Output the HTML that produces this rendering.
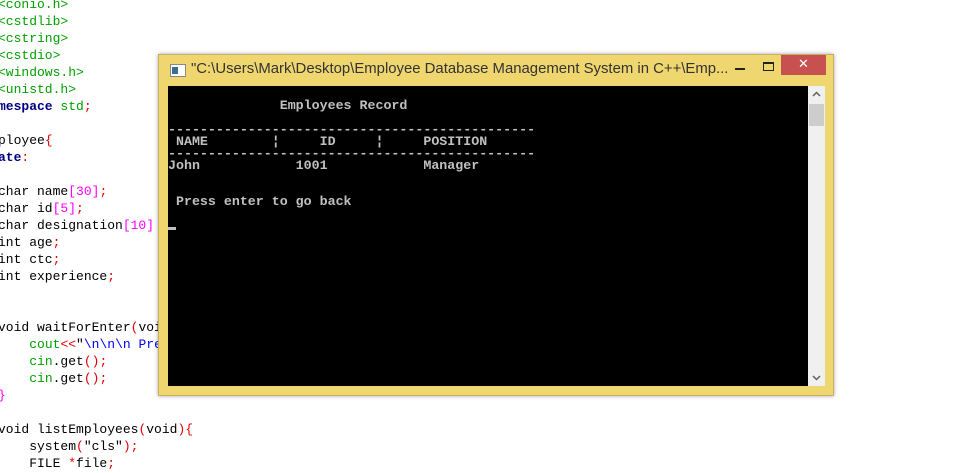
<!DOCTYPE html>
<html><head><style>
body{margin:0;width:961px;height:473px;background:#fff;overflow:hidden;position:relative;font-family:"Liberation Mono",monospace}
.code{position:absolute;left:-2px;top:-4px;font-size:13px;line-height:17px;white-space:pre;color:#000}
.g{color:#00a000}.r{color:#e00000}.m{color:#ff00ff}.b{color:#000080;font-weight:bold}.s{color:#0000ff}
#win{position:absolute;left:158px;top:54px;width:676px;height:342px;background:#f0d66e;box-shadow:0 0 4px rgba(0,0,0,.35);border:1px solid #c8b060;box-sizing:border-box}
#con{position:absolute;left:168px;top:86px;width:640px;height:300px;background:#000;overflow:hidden}
#con pre{margin:0;font-family:"Liberation Mono",monospace;font-size:13.3px;line-height:12px;color:#c0c0c0;font-weight:bold;position:absolute;left:0;top:14px}
#sb{position:absolute;left:808px;top:86px;width:17px;height:300px;background:#f0f0f0}
</style></head><body>
<div class="code"><span class="g">&lt;conio.h&gt;</span>
<span class="g">&lt;cstdlib&gt;</span>
<span class="g">&lt;cstring&gt;</span>
<span class="g">&lt;cstdio&gt;</span>
<span class="g">&lt;windows.h&gt;</span>
<span class="g">&lt;unistd.h&gt;</span>
<span class="b">mespace</span> <span class="g">std</span><span class="r">;</span>

ployee<span class="r">{</span>
<span class="b">ate</span><span class="r">:</span>

char name<span class="m">[30]</span><span class="r">;</span>
char id<span class="m">[5]</span><span class="r">;</span>
char designation<span class="m">[10]</span>
int age<span class="r">;</span>
int ctc<span class="r">;</span>
int experience<span class="r">;</span>


void waitForEnter<span class="r">(</span>void
    <span class="g">cout</span><span class="r">&lt;&lt;</span>"<span class="s">\n\n\n Pre</span>
    <span class="g">cin</span>.get<span class="r">();</span>
    <span class="g">cin</span>.get<span class="r">();</span>
<span class="m">}</span>

void listEmployees<span class="r">(</span>void<span class="r">){</span>
    system<span class="r">(</span>"cls"<span class="r">);</span>
    FILE <span class="r">*</span>file<span class="r">;</span></div>
<div id="win">
<div style="position:absolute;left:11px;top:9px;width:14px;height:11px;border:1px solid #888;background:#fff"><div style="position:absolute;left:1px;top:2px;width:6px;height:7px;background:#3a6f8f"></div></div>
<div style="position:absolute;left:32px;top:6px;font-family:'Liberation Sans',sans-serif;font-size:14.9px;color:#333;white-space:nowrap">"C:\Users\Mark\Desktop\Employee Database Management System in C++\Emp...</div>
<div style="position:absolute;left:576px;top:13px;width:10px;height:2px;background:#222"></div>
<div style="position:absolute;left:604px;top:7px;width:9px;height:6px;border:1px solid #222;border-top-width:2px"></div>
<div style="position:absolute;left:622px;top:0;width:45px;height:20px;background:#c75050;color:#fff;font-family:'DejaVu Sans',sans-serif;font-size:13px;text-align:center;line-height:20px">✕</div>
</div>
<div id="con"><pre>              Employees Record

----------------------------------------------
 NAME        ¦     ID     ¦     POSITION
----------------------------------------------
John            1001            Manager


 Press enter to go back
</pre>
<div style="position:absolute;left:0;top:141px;width:8px;height:3px;background:#c0c0c0"></div>
</div>
<div id="sb">
<div style="position:absolute;top:18px;left:1px;width:15px;height:22px;background:#cdcdcd"></div>
<svg style="position:absolute;top:5px;left:4px" width="9" height="6"><path d="M1 5 L4.5 1.5 L8 5" stroke="#606060" stroke-width="1.5" fill="none"/></svg>
<svg style="position:absolute;top:289px;left:4px" width="9" height="6"><path d="M1 1 L4.5 4.5 L8 1" stroke="#606060" stroke-width="1.5" fill="none"/></svg>
</div>
</body></html>
